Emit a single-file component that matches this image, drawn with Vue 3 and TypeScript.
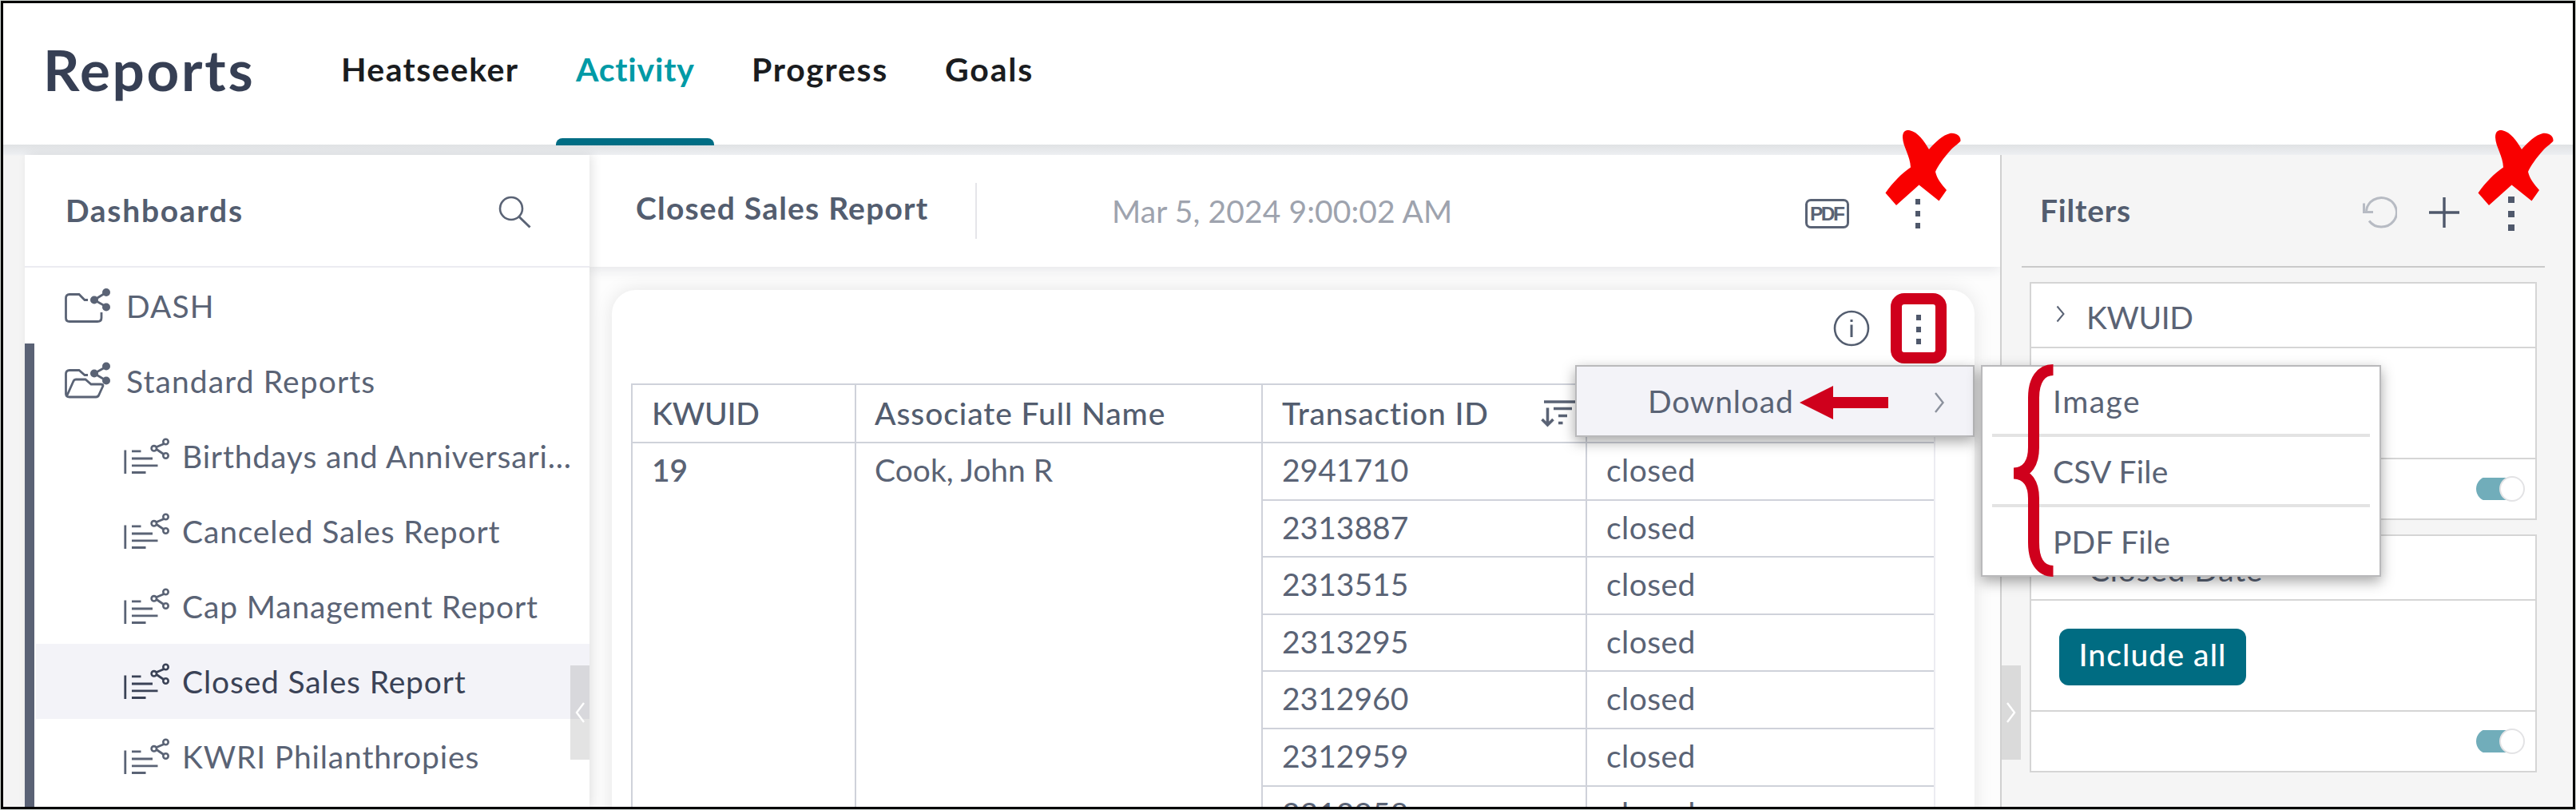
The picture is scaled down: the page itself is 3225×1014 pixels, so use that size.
<script setup lang="ts">
interface Report {
  name: string
  active?: boolean
}

const tabs: { label: string; cls: string; active?: boolean }[] = [
  { label: 'Heatseeker', cls: 'tab-heat' },
  { label: 'Activity', cls: 'tab-act', active: true },
  { label: 'Progress', cls: 'tab-prog' },
  { label: 'Goals', cls: 'tab-goals' },
]

const reports: Report[] = [
  { name: 'Birthdays and Anniversari...' },
  { name: 'Canceled Sales Report' },
  { name: 'Cap Management Report' },
  { name: 'Closed Sales Report', active: true },
  { name: 'KWRI Philanthropies' },
]

const transactions: string[] = [
  '2941710',
  '2313887',
  '2313515',
  '2313295',
  '2312960',
  '2312959',
  '2312958',
]

const formats: string[] = ['Image', 'CSV File', 'PDF File']
</script>

<template>
  <div class="frame">
    <div class="screen">
      <header class="topbar">
        <h1>Reports</h1>
        <nav class="tabs">
          <a v-for="t in tabs" :key="t.label" :class="['tab', t.cls, { active: t.active }]">{{ t.label }}</a>
        </nav>
      </header>

      <div class="body">
        <aside class="sidebar">
          <div class="side-head">
            <span class="bold">Dashboards</span>
            <svg class="search" width="42" height="42" viewBox="0 0 42 42" fill="none" stroke="#5a6375" stroke-width="2.6">
              <circle cx="16" cy="16" r="14" />
              <path d="M26 26.500L39.500 39.500" stroke-width="3" />
            </svg>
          </div>
          <div class="folder">
            <svg class="ficon" width="60" height="46" viewBox="0 0 60 46" fill="none" stroke="#5a6375" stroke-width="2.800">
              <path d="M30 15.500H26L19 8.500H7Q2.500 8.500 2.500 13V38Q2.500 42.500 7 42.500H42Q47 42.500 47 38V31" />
              <path d="M53 6L38 15.500L53 24" />
              <g fill="#5a6375" stroke="none"><circle cx="53" cy="6" r="5" /><circle cx="38" cy="15.500" r="5" /><circle cx="53" cy="24.500" r="5" /></g>
            </svg>
            <span>DASH</span>
          </div>
          <div class="group">
            <div class="folder">
              <svg class="ficon" width="60" height="48" viewBox="0 0 60 48" fill="none" stroke="#5a6375" stroke-width="2.800">
                <path d="M30 16.500H26L19 10.500H7Q2.500 10.500 2.500 15V40Q2.500 44 7 44H40Q43 44 44 41L49 30Q49 28 46 28H34L27 22H15Q13 22 12 24L4 42" />
                <path d="M53 6L38 14.500L53 23.500" />
                <g fill="#5a6375" stroke="none"><circle cx="53" cy="5.500" r="5" /><circle cx="38" cy="14.500" r="5" /><circle cx="53" cy="23.500" r="5" /></g>
              </svg>
              <span>Standard Reports</span>
            </div>
            <div v-for="r in reports" :key="r.name" :class="['report', { active: r.active }]">
              <svg class="ricon" width="60" height="48" viewBox="0 0 60 48" fill="none" stroke="currentColor" stroke-width="2.800">
                <path d="M1.800 16.500V46M10 17.800H21.500M10 27H36M10 35.800H42.500M10 44.500H27.500" />
                <path d="M50.500 8.500L41 12.500M41 15.500L50.500 22" />
                <g stroke-width="2.600"><circle cx="52.500" cy="6" r="3.200" /><circle cx="37.800" cy="14.300" r="3.200" /><circle cx="52.500" cy="23.500" r="3.200" /></g>
              </svg>
              <span>{{ r.name }}</span>
            </div>
          </div>
          <div class="handle handle-left">
            <svg width="14" height="28" viewBox="0 0 14 28" fill="none" stroke="#fff" stroke-width="2.400"><path d="M12 2L3 14L12 26" /></svg>
          </div>
        </aside>

        <main class="main">
          <div class="main-head">
            <span class="bold report-title">Closed Sales Report</span>
            <i class="vline"></i>
            <span class="date">Mar 5, 2024 9:00:02 AM</span>
            <span class="pdf">PDF</span>
            <div class="dots"><i></i><i></i><i></i></div>
          </div>
          <div class="main-body">
            <section class="card">
              <div class="card-tools">
                <svg width="46" height="46" viewBox="0 0 46 46" fill="none" stroke="#535d6f" stroke-width="2.600">
                  <circle cx="23" cy="23" r="21" />
                  <path d="M23 18.500V34M23 12V15" stroke-width="3" />
                </svg>
                <div class="callout"><div class="dots"><i></i><i></i><i></i></div></div>
              </div>
              <div class="table">
                <div class="thead">
                  <div class="c1">KWUID</div>
                  <div class="c2">Associate Full Name</div>
                  <div class="c3">
                    <span class="tid">Transaction ID</span>
                    <svg class="sort" width="46" height="36" viewBox="0 0 46 36" fill="none" stroke="#5a6375" stroke-width="3.600">
                      <path d="M4 3H46M16 11.500H39M22 20.500H33M22 29.500H27.500M8.500 10.500V32M1.500 25L8.500 32L15.500 25" />
                    </svg>
                  </div>
                  <div class="c4"></div>
                </div>
                <div class="tbody">
                  <div class="c1 medium">19</div>
                  <div class="c2">Cook, John R</div>
                  <div class="rows">
                    <div v-for="t in transactions" :key="t" class="trow">
                      <div class="c3">{{ t }}</div>
                      <div class="c4">closed</div>
                    </div>
                  </div>
                </div>
              </div>
            </section>
          </div>
        </main>

        <aside class="filters">
          <div class="filters-head">
            <span class="bold">Filters</span>
            <svg class="reset" width="44" height="42" viewBox="0 0 44 42" fill="none" stroke="#b7bbc3" stroke-width="3">
              <path d="M9 31.500A19 18.300 0 1 0 5.500 19" />
              <path d="M2.500 9.500V20.500H14" />
            </svg>
            <svg class="plus" width="38" height="40" viewBox="0 0 38 40" stroke="#4f586b" stroke-width="3.400"><path d="M0 20H38M19 1V39" /></svg>
            <div class="dots big"><i></i><i></i><i></i></div>
          </div>
          <div class="filter-box">
            <div class="fb-title">
              <svg width="12" height="22" viewBox="0 0 12 22" fill="none" stroke="#5a6375" stroke-width="2"><path d="M1.500 1.500L9.500 11L1.500 20.500" /></svg>
              <span>KWUID</span>
            </div>
            <div class="fb-body"></div>
            <div class="fb-foot"><div class="toggle"><i></i></div></div>
          </div>
          <div class="filter-box">
            <div class="fb-title closed-date"><span>Closed Date</span></div>
            <div class="fb-body"><button>Include all</button></div>
            <div class="fb-foot"><div class="toggle"><i></i></div></div>
          </div>
          <div class="handle handle-right">
            <svg width="14" height="28" viewBox="0 0 14 28" fill="none" stroke="#fff" stroke-width="2.400"><path d="M2 2L11 14L2 26" /></svg>
          </div>
        </aside>
      </div>
    </div>

    <!-- open context menu and its submenu -->
    <div class="menu">
      <span>Download</span>
      <svg class="arrow" width="111" height="42" viewBox="0 0 111 42" fill="#cf001c"><path d="M0 21L42 0V14H111V28H42V42Z" /></svg>
      <svg class="chev" width="14" height="28" viewBox="0 0 14 28" fill="none" stroke="#8b919d" stroke-width="2.400"><path d="M2 2L11.500 14L2 26" /></svg>
    </div>
    <div class="submenu">
      <div v-for="f in formats" :key="f" class="item">{{ f }}</div>
    </div>

    <!-- annotation marks -->
    <svg class="brace" width="50" height="266" viewBox="0 0 50 266" fill="none" stroke="#cf001c" stroke-width="14">
      <path d="M49.500 7C34 7 25 20 25 42V104C25 123 18 136 0 136.500C18 137 25 150 25 168V223C25 246 34 259 49.500 259" />
    </svg>
    <svg v-for="side in ['left', 'right']" :key="side" :class="['cross', side]" width="95" height="96" viewBox="0 0 95 96" fill="#f90000">
      <path d="M22 10C22 2 26 .5 31 1.200C41 3 49 15 55 25C63 16 72 7 82 4.800C89 4 95 8 94.500 14.500C92 18 88 19.500 82 26C73 36 66 46 63 53C65 62 71 69 77 76L67.500 89.500L42.500 69.500L14 95L.500 79.500C10 66 21 55 32 47.500C31.500 33 22.500 22 22 10Z" />
    </svg>
  </div>
</template>

<style>
body {
  margin: 0;
  overflow: hidden;
}
</style>

<style scoped>
.frame,
.frame * {
  box-sizing: border-box;
}
.frame {
  position: relative;
  width: 3225px;
  height: 1014px;
  padding: 1px;
  background: #cdd3d0;
  font-family: Lato, "Open Sans", sans-serif;
  font-size: 39px;
  line-height: 1.2;
  color: #5a6375;
  white-space: nowrap;
  overflow: hidden;
}
.screen {
  width: 3223px;
  height: 1012px;
  border: 3px solid #000;
  background: #fff;
  overflow: hidden;
}
.topbar {
  display: flex;
  align-items: center;
  height: 177px;
  padding: 0 0 12px 50px;
}
h1 {
  width: 373px;
  margin: 0;
  font-size: 71px;
  font-weight: 700;
  letter-spacing: 2.7px;
  color: #363f54;
}
.tabs {
  display: flex;
  align-items: center;
  height: 165px;
}
.tab {
  position: relative;
  font-size: 41px;
  font-weight: 700;
  color: #1a1c20;
}
.tab-heat { width: 294px; letter-spacing: 1.4px; }
.tab-act { width: 220px; letter-spacing: 0.8px; }
.tab-prog { width: 242px; letter-spacing: 1.7px; }
.tab-goals { letter-spacing: 1.8px; }
.tab.active {
  color: #009aa6;
}
.tab.active::after {
  content: "";
  position: absolute;
  left: -25px;
  top: 111px;
  width: 198px;
  height: 9px;
  border-radius: 8px 8px 0 0;
  background: #006d84;
}
.body {
  display: flex;
  height: 829px;
  padding: 13px 0 0 27px;
  background: linear-gradient(#e0e2e4 0, #eceef1 12px, #f4f4f4 14px);
}
.bold {
  font-weight: 700;
  color: #535d6f;
}
.medium {
  font-weight: 600;
}
.sidebar {
  position: relative;
  z-index: 2;
  width: 707px;
  height: 816px;
  background: #fff;
  box-shadow: 4px 0 12px rgba(0, 0, 0, 0.1);
}
.side-head {
  display: flex;
  align-items: center;
  height: 141px;
  margin-bottom: 1px;
  padding: 0 72px 0 51px;
  border-bottom: 2px solid #ebebf1;
  letter-spacing: 1.7px;
}
.search {
  margin: 5px 0 0 auto;
}
.folder {
  display: flex;
  align-items: center;
  height: 94px;
  padding-left: 49px;
}
.folder span {
  margin: 1px 0 0 18px;
  letter-spacing: 1.1px;
}
.group {
  height: 600px;
  border-left: 12px solid #5a6275;
}
.group .folder {
  padding-left: 37px;
}
.report {
  display: flex;
  align-items: center;
  height: 94px;
  margin-left: 2px;
  padding-left: 110px;
  letter-spacing: 0.85px;
}
.report span {
  margin-top: 1px;
}
.ricon {
  margin-right: 13px;
}
.report.active {
  background: #f3f3f8;
  color: #3a4256;
}
.handle {
  position: absolute;
  top: 639px;
  width: 24px;
  height: 118px;
  display: flex;
  align-items: center;
  justify-content: center;
  background: rgba(0, 0, 0, 0.11);
}
.handle-left { right: 0; }
.handle-right { left: 0; }
.main {
  width: 1766px;
  height: 816px;
  background: #fdfdfd;
  overflow: hidden;
}
.main-head {
  position: relative;
  display: flex;
  align-items: center;
  height: 140px;
  padding-left: 58px;
  background: #fff;
  box-shadow: 0 2px 16px rgba(30, 40, 60, 0.13);
}
.report-title {
  width: 425px;
  margin-top: -8px;
  letter-spacing: 1.2px;
}
.vline {
  width: 2px;
  height: 70px;
  background: #e5e5e9;
}
.date {
  width: 868px;
  margin: 0 0 0 169px;
  letter-spacing: 0.1px;
  color: #9ea3ae;
}
.pdf {
  width: 55px;
  height: 37px;
  margin-top: 6px;
  border: 3px solid #5a6375;
  border-radius: 7px;
  font-family: "Liberation Sans", Roboto, sans-serif;
  font-size: 24.5px;
  font-weight: 700;
  line-height: 32px;
  text-indent: 3px;
  letter-spacing: -2.5px;
}
.dots {
  display: flex;
  flex-direction: column;
  justify-content: space-between;
  width: 6px;
  height: 37px;
}
.dots i {
  height: 7px;
  background: #4f586b;
}
.main-head .dots {
  margin: 7px 0 0 83px;
}
.main-body {
  padding: 29px 32px 0 28px;
}
.card {
  height: 700px;
  padding: 0 50px 0 24px;
  border-radius: 30px;
  background: #fff;
  box-shadow: 0 0 24px rgba(0, 0, 0, 0.1);
}
.card-tools {
  display: flex;
  justify-content: flex-end;
  height: 117px;
  padding-top: 4px;
  margin-right: -15px;
}
.card-tools svg {
  margin: 21px 26px 0 0;
}
.callout {
  display: flex;
  align-items: center;
  justify-content: center;
  width: 70px;
  height: 88px;
  border: 14px solid #cf001c;
  border-radius: 17px;
}
.card-tools .dots {
  margin-top: 3px;
}
.table {
  width: 1633px;
  border: 2px solid #cfd2da;
  border-right-color: #ececf1;
}
.thead {
  display: flex;
  height: 73px;
  line-height: 71px;
  border-bottom: 2px solid #cfd2da;
  color: #535d6f;
  font-weight: 500;
}
.thead .c1 {
  letter-spacing: -0.3px;
}
.thead .c2 {
  letter-spacing: 0.9px;
}
.tbody {
  display: flex;
  height: 460px;
  line-height: 66px;
}
.c1 { width: 280px; padding-left: 24px; border-right: 2px solid #cfd2da; }
.c2 { width: 509px; padding-left: 23px; border-right: 2px solid #cfd2da; }
.c3 { width: 406px; padding-left: 24px; border-right: 2px solid #cfd2da; }
.c4 { padding-left: 24px; letter-spacing: 0.4px; }
.thead .c3 {
  display: flex;
  align-items: center;
}
.tid {
  width: 324px;
  letter-spacing: 0.8px;
}
.rows {
  flex: 1;
}
.trow {
  display: flex;
  height: 71.6px;
  border-bottom: 2px solid #cfd2da;
}
.filters {
  position: relative;
  width: 717px;
  height: 816px;
  padding: 0 45px 0 35px;
  border-left: 2px solid #d0d0d0;
  background: #f5f5f5;
}
.filters-head {
  display: flex;
  align-items: center;
  height: 141px;
  margin: 0 -10px;
  padding: 0 0 0 23px;
  border-bottom: 2px solid #cacaca;
}
.filters-head .bold {
  width: 403px;
  letter-spacing: 0.8px;
}
.plus {
  margin: 4px 0 0 40px;
}
.reset {
  margin-top: 4px;
}
.dots.big {
  width: 8px;
  height: 43px;
  margin: 8px 0 0 61px;
}
.dots.big i {
  height: 8px;
}
.filter-box {
  height: 298px;
  margin-top: 18px;
  border: 2px solid #d5d5d5;
  background: #fff;
}
.fb-title {
  display: flex;
  align-items: center;
  height: 81px;
  padding: 6px 0 0 31px;
  border-bottom: 2px solid #d5d5d5;
  letter-spacing: -0.4px;
}
.fb-title svg {
  margin: -9px 26px 0 0;
}
.fb-title.closed-date {
  padding: 6px 0 0 72px;
  letter-spacing: 0.8px;
}
.fb-body {
  height: 139px;
  padding: 35px;
  border-bottom: 2px solid #d5d5d5;
}
.fb-foot {
  display: flex;
  justify-content: flex-end;
  padding: 21px 13px 0 0;
}
.toggle {
  display: flex;
  justify-content: flex-end;
  align-items: center;
  width: 61px;
  height: 32px;
  background: linear-gradient(#71adba, #71adba) 0 2px / 42px 28px no-repeat;
  border-radius: 16px;
}
.toggle i {
  width: 32px;
  height: 32px;
  border: 2px solid #e3e3e5;
  border-radius: 50%;
  background: #fff;
}
button {
  width: 234px;
  height: 71px;
  padding: 0 0 7px;
  border: 0;
  border-radius: 12px;
  background: #006c82;
  color: #fff;
  font: 500 39px Lato, sans-serif;
  letter-spacing: 1.1px;
}
.menu {
  position: absolute;
  z-index: 3;
  left: 1972px;
  top: 457px;
  display: flex;
  align-items: center;
  width: 500px;
  height: 90px;
  padding: 0 35px 0 89px;
  border: 2px solid #b9b9bb;
  background: #f3f3f8;
  box-shadow: 0 6px 16px rgba(0, 0, 0, 0.35);
}
.menu span {
  width: 190px;
  letter-spacing: 0.8px;
}
.menu .arrow {
  margin-top: 3px;
}
.menu .chev {
  margin: 3px 0 0 auto;
}
.submenu {
  position: absolute;
  z-index: 4;
  left: 2480px;
  top: 457px;
  width: 501px;
  height: 265px;
  padding: 0 12px;
  border: 2px solid #b9b9bb;
  background: #fff;
  box-shadow: 0 6px 16px rgba(0, 0, 0, 0.35);
}
.item {
  height: 88px;
  padding-left: 76px;
  line-height: 86px;
  letter-spacing: 0.2px;
  border-bottom: 4px solid #e3e3e3;
}
.item:first-child {
  letter-spacing: 1.5px;
}
.item:last-child {
  border-bottom: 0;
}
.brace {
  position: absolute;
  z-index: 5;
  left: 2521px;
  top: 456px;
}
.cross {
  position: absolute;
  z-index: 5;
  top: 162px;
}
.cross.left { left: 2360px; }
.cross.right { left: 3102px; }
</style>
